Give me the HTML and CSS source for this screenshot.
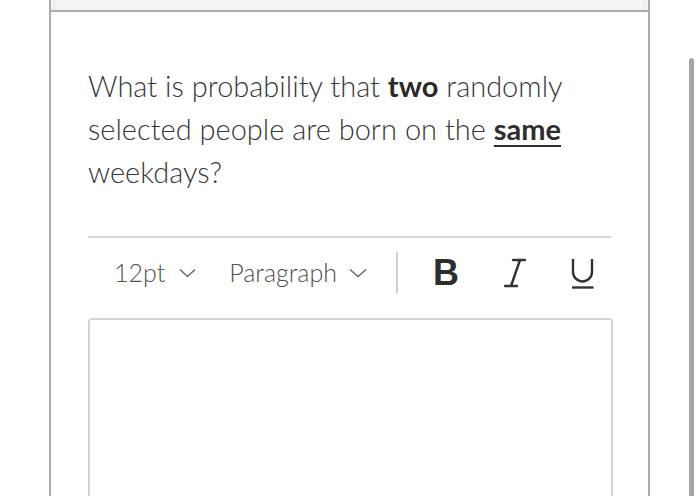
FILE: index.html
```html
<!DOCTYPE html>
<html>
<head>
<meta charset="utf-8">
<link rel="stylesheet" href="styles.css">
</head>
<body>
<div class="frame">
  <div class="header"><div class="header-inner"></div></div>
  <div class="content">
    <p class="question">What is probability that <b>two</b> randomly selected people are born on the <u>same</u> weekdays?</p>
    <div class="toolbar">
      <span class="tb-text size">12pt</span>
      <svg class="chev chev1" width="17" height="10" viewBox="0 0 17 10"><path d="M1 1.5 L8.5 8.5 L16 1.5" fill="none" stroke="#6a6a6a" stroke-width="1.5"/></svg>
      <span class="tb-text para">Paragraph</span>
      <svg class="chev chev2" width="18" height="10" viewBox="0 0 18 10"><path d="M1 1.5 L9 8.5 L17 1.5" fill="none" stroke="#6a6a6a" stroke-width="1.5"/></svg>
      <span class="sep"></span>
      <span class="bold-btn">B</span>
      <svg class="ital" width="23" height="30" viewBox="0 0 23 30"><path d="M9 2 L21 2 M16 2 L7 28 M1 28 L13 28" fill="none" stroke="#333" stroke-width="2.4" stroke-linecap="round"/></svg>
      <svg class="under" width="25" height="32" viewBox="0 0 25 32"><path d="M3 1 L3 14 A9.5 9.5 0 0 0 22 14 L22 1" fill="none" stroke="#333" stroke-width="2.4"/><path d="M2 29.5 L23.5 29.5" stroke="#333" stroke-width="2.4"/></svg>
    </div>
    <div class="editor"></div>
  </div>
</div>
<div class="scrollbar"></div>
</body>
</html>
```
FILE: styles.css
```css
html, body {
  margin: 0;
  padding: 0;
  background: #ffffff;
  overflow: hidden;
}
body {
  font-family: Lato, "Liberation Sans", sans-serif;
  height: 496px;
}
.frame {
  margin-left: 49px;
  width: 597px;
  height: 496px;
  border-left: 2px solid #acacac;
  border-right: 2px solid #acacac;
}
.header {
  height: 10px;
  background: #f4f4f4;
  border-bottom: 2px solid #acacac;
  padding: 0 3px;
}
.header-inner {
  height: 10px;
  border-left: 1px solid #e4e4e4;
  border-right: 1px solid #e4e4e4;
}
.content {
  padding-left: 37px;
  padding-top: 1px;
}
.question {
  margin: 51px 0 0 0;
  width: 530px;
  font-size: 29px;
  font-weight: 300;
  line-height: 43px;
  color: #383838;
}
.question b {
  font-weight: 700;
  color: #2a2a2a;
}
.question u {
  text-decoration-thickness: 2px;
  text-underline-offset: 5px;
  color: #2e2e2e;
  font-weight: 700;
}
.toolbar {
  margin-top: 43px;
  height: 69px;
  border-top: 2px solid #d6d6d6;
  display: flex;
  align-items: center;
  padding-left: 26px;
  width: 497px;
}
.tb-text {
  font-size: 25px;
  font-weight: 300;
  color: #505050;
  line-height: 1;
}
.chev1 { margin-left: 14px; }
.para { margin-left: 33px; }
.chev2 { margin-left: 12px; }
.sep {
  width: 2px;
  height: 41px;
  background: #cfcfcf;
  margin-left: 29px;
}
.bold-btn {
  margin-left: 35px;
  font-size: 36px;
  font-weight: 700;
  color: #2d2d2d;
  line-height: 1;
  font-family: "Liberation Sans", Arial, sans-serif;
}
.ital { margin-left: 45px; }
.under { margin-left: 43px; margin-top: 2px; }
.editor {
  margin-top: 11px;
  width: 521px;
  height: 220px;
  border: 2px solid #d4d4d4;
  border-radius: 4px;
}
.scrollbar {
  position: absolute;
  left: 689px;
  top: 58px;
  width: 5px;
  height: 460px;
  background: #a6a6a6;
  border-radius: 3px;
}
```
